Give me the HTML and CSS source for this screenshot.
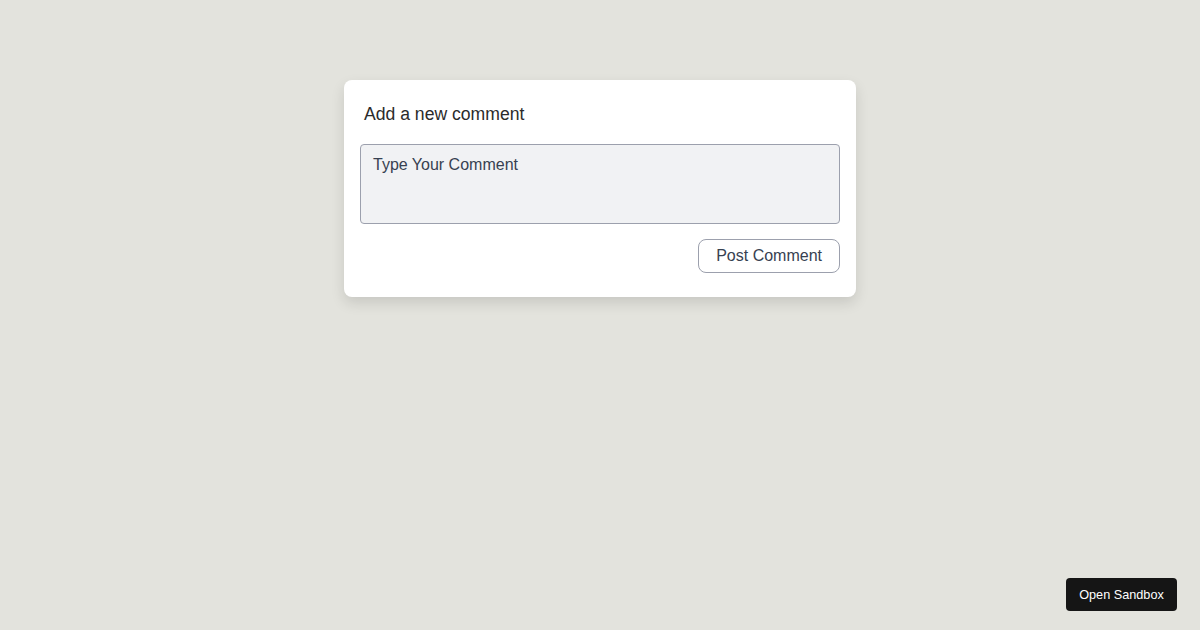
FILE: index.html
```html
<!DOCTYPE html>
<html>
<head>
<meta charset="utf-8">
<link rel="stylesheet" href="styles.css">
</head>
<body>
<div class="page">
  <div class="card">
    <h2 class="title">Add a new comment</h2>
    <textarea class="input" placeholder="Type Your Comment"></textarea>
    <div class="actions">
      <button class="post">Post Comment</button>
    </div>
  </div>
</div>
<a class="sandbox">Open Sandbox</a>
</body>
</html>
```
FILE: styles.css
```css
html, body {
  margin: 0;
  padding: 0;
  height: 100%;
}
body {
  background: #e3e3dd;
  font-family: "Liberation Sans", Arial, sans-serif;
  color: #2b2b2b;
}
.page {
  display: flex;
  justify-content: center;
  padding-top: 80px;
}
.card {
  width: 512px;
  box-sizing: border-box;
  background: #fff;
  border-radius: 8px;
  padding: 20px 16px 24px;
  box-shadow: 0 6px 14px rgba(0, 0, 0, 0.12);
  display: flex;
  flex-direction: column;
}
.title {
  margin: 0 0 16px;
  padding: 0 4px;
  font-size: 17.6px;
  font-weight: 400;
  line-height: 28px;
  color: #2b2b2b;
}
.input {
  display: block;
  box-sizing: border-box;
  width: 100%;
  height: 80px;
  resize: none;
  background: #f1f2f4;
  border: 1px solid #9ca0ad;
  border-radius: 4px;
  padding: 10px 12px;
  font-family: "Liberation Sans", Arial, sans-serif;
  font-size: 16px;
  line-height: 20px;
  color: #374151;
  outline: none;
}
.input::placeholder {
  color: #374151;
  opacity: 1;
}
.actions {
  display: flex;
  justify-content: flex-end;
  margin-top: 15px;
}
.post {
  height: 34px;
  box-sizing: border-box;
  padding: 0 17px;
  background: #fff;
  border: 1px solid #9ca0ad;
  border-radius: 8px;
  font-family: "Liberation Sans", Arial, sans-serif;
  font-size: 16px;
  color: #374151;
}
.sandbox {
  position: fixed;
  right: 23px;
  bottom: 19px;
  width: 111px;
  height: 33px;
  box-sizing: border-box;
  display: flex;
  align-items: center;
  justify-content: center;
  background: #151515;
  color: #fff;
  border-radius: 4px;
  font-size: 12.7px;
}
```
